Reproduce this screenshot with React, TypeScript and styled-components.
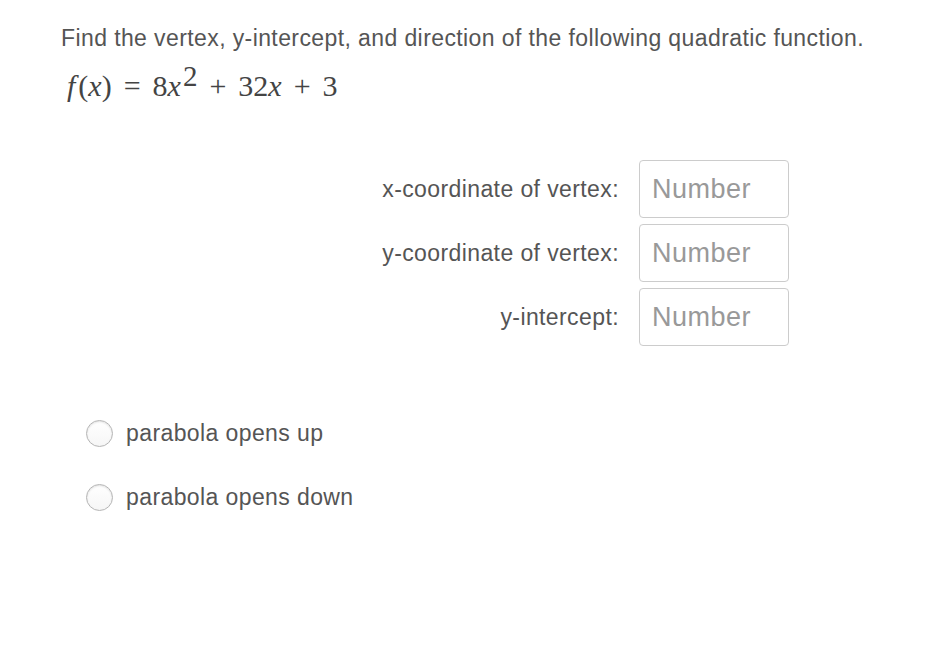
import React from 'react';
import styled, { createGlobalStyle } from 'styled-components';

const GlobalStyle = createGlobalStyle`
  html, body {
    margin: 0;
    padding: 0;
    background: #ffffff;
  }
  body {
    font-family: "Liberation Sans", Arial, Helvetica, sans-serif;
    color: #555555;
  }
`;

const Page = styled.div`
  width: 952px;
  height: 670px;
  box-sizing: border-box;
  padding: 23px 0 0 61px;
`;

const Prompt = styled.div`
  font-size: 23px;
  letter-spacing: 0.4px;
  line-height: 30px;
  color: #555555;
`;

const Formula = styled.div`
  margin: 17px 0 0 6px;
  font-family: "Liberation Serif", "Times New Roman", serif;
  font-size: 30px;
  line-height: 32px;
  color: #444444;
`;

const Var = styled.i<{ $gap?: number }>`
  font-style: italic;
  margin-right: ${({ $gap }) => $gap || 0}px;
`;

const Sup = styled.sup`
  font-size: 29px;
  line-height: 0;
  vertical-align: 10px;
  margin-left: 2px;
`;

const Op = styled.span`
  margin: 0 12px;
`;

const Fields = styled.div`
  width: 728px;
  margin-top: 58px;
  display: grid;
  grid-template-columns: auto 150px;
  justify-content: end;
  column-gap: 20px;
  row-gap: 6px;
  align-items: center;
`;

const Label = styled.label`
  font-size: 23px;
  letter-spacing: 0.4px;
  color: #555555;
  text-align: right;
`;

const NumberInput = styled.input`
  box-sizing: border-box;
  width: 150px;
  height: 58px;
  border: 1px solid #cccccc;
  border-radius: 4px;
  padding: 0 12px;
  font-family: "Liberation Sans", Arial, sans-serif;
  font-size: 27px;
  letter-spacing: 0.5px;
  color: #555555;
  outline: none;

  &::placeholder {
    color: #999999;
  }
`;

const Choices = styled.div`
  margin-top: 73px;
  padding-left: 25px;
  display: flex;
  flex-direction: column;
  gap: 36px;
`;

const Choice = styled.label`
  display: flex;
  align-items: center;
  gap: 13px;
  font-size: 23px;
  letter-spacing: 0.4px;
  color: #555555;
  height: 28px;
`;

const RadioCircle = styled.span`
  box-sizing: border-box;
  width: 27px;
  height: 27px;
  border-radius: 50%;
  border: 1px solid #b5b5b5;
  background: linear-gradient(#ffffff, #f6f6f6);
  box-shadow: inset 0 1px 2px rgba(0, 0, 0, 0.12);
  flex-shrink: 0;
`;

const fields = ['x-coordinate of vertex:', 'y-coordinate of vertex:', 'y-intercept:'];
const choices = ['parabola opens up', 'parabola opens down'];

export default function App() {
  return (
    <>
      <GlobalStyle />
      <Page>
        <Prompt>Find the vertex, y-intercept, and direction of the following quadratic function.</Prompt>
        <Formula>
          <Var $gap={3}>f</Var>(<Var>x</Var>)<Op>=</Op>8<Var>x</Var>
          <Sup>2</Sup>
          <Op>+</Op>32<Var>x</Var>
          <Op>+</Op>3
        </Formula>
        <Fields>
          {fields.map((f) => (
            <React.Fragment key={f}>
              <Label>{f}</Label>
              <NumberInput placeholder="Number" />
            </React.Fragment>
          ))}
        </Fields>
        <Choices>
          {choices.map((c) => (
            <Choice key={c}>
              <RadioCircle />
              {c}
            </Choice>
          ))}
        </Choices>
      </Page>
    </>
  );
}
